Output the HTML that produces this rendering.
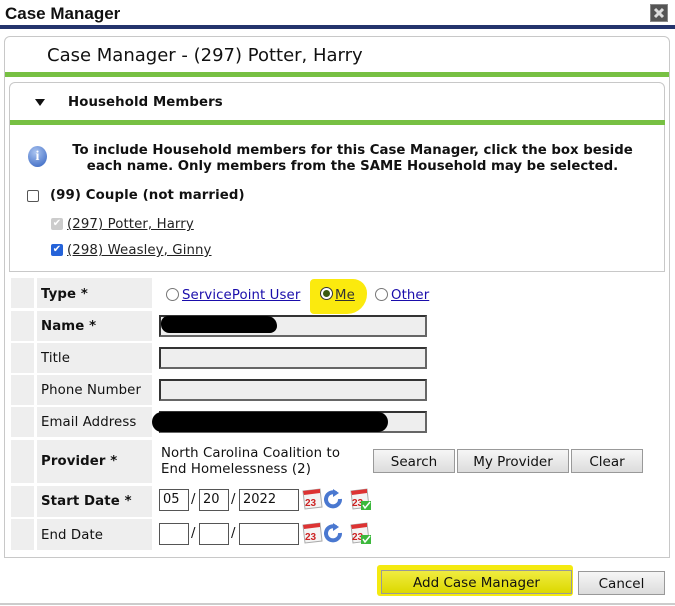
<!DOCTYPE html>
<html><head><meta charset="utf-8"><style>
*{box-sizing:border-box;margin:0;padding:0}
body{width:675px;height:606px;background:#fff;position:relative;overflow:hidden;font-family:"DejaVu Sans",Verdana,sans-serif;color:#111}
.a{position:absolute}
.t13{font-size:13.3px;letter-spacing:0.1px}
.b{font-weight:bold}
.cell{position:absolute;background:#eeeeee}
.inp{position:absolute;background:#eee;border:2px solid #333;border-right-color:#666;border-bottom-color:#666}
.din{position:absolute;background:#fff;border:1px solid #555;font-size:13px;padding:2px 3px;height:22px;line-height:16px}
.btn{position:absolute;background:linear-gradient(#f6f6f6,#dcdcdc);border:1px solid #999;font-size:13.5px;text-align:center;line-height:24px}
.radio{position:absolute;width:13px;height:13px;border:1px solid #777;border-radius:50%;background:#fff}
a{color:#1a0dab;text-decoration:underline}
.lk{text-decoration:underline}
</style></head><body>
<div class="a b" style="left:5px;top:4px;font-family:'Liberation Sans',sans-serif;font-size:17px">Case Manager</div>
<div class="a" style="left:650px;top:4px;width:18px;height:18px;background:#555;border:1px solid #888"><svg width="16" height="16"><path d="M4 4L12 12M12 4L4 12" stroke="#ddd" stroke-width="3"/></svg></div>
<div class="a" style="left:0;top:25px;width:675px;height:4px;background:#24346c"></div>

<div class="a" style="left:4px;top:36px;width:666px;height:522px;border:1px solid #c8c8c8;border-radius:6px 6px 0 0"></div>
<div class="a" style="left:47px;top:45px;font-size:18px;letter-spacing:0px">Case Manager - (297) Potter, Harry</div>
<div class="a" style="left:5px;top:72px;width:664px;height:5px;background:#77c043"></div>

<div class="a" style="left:9px;top:82px;width:656px;height:190px;border:1px solid #c8c8c8;border-radius:6px 6px 0 0"></div>
<div class="a" style="left:35px;top:99px;width:0;height:0;border-left:5px solid transparent;border-right:5px solid transparent;border-top:7px solid #111"></div>
<div class="a b t13" style="left:68px;top:95px">Household Members</div>
<div class="a" style="left:10px;top:120px;width:655px;height:5px;background:#77c043"></div>

<div class="a" style="left:28px;top:146px;width:19px;height:21px;border-radius:50%;background:radial-gradient(circle at 40% 30%,#aac4f0,#2f5fbf);color:#fff;font:bold 14px 'Liberation Serif',serif;text-align:center;line-height:21px">i</div>
<div class="a b t13" style="left:50px;top:143px;width:605px;text-align:center;line-height:16px;font-size:13.3px;letter-spacing:0">To include Household members for this Case Manager, click the box beside<br>each name. Only members from the SAME Household may be selected.</div>
<div class="a" style="left:27px;top:190px;width:12px;height:12px;border:1px solid #555;border-radius:2px;background:#fff"></div>
<div class="a b t13" style="left:50px;top:188px">(99) Couple (not married)</div>
<div class="a" style="left:51px;top:218px;width:12px;height:12px;background:#ccc;border-radius:2px;color:#fff;font-size:10px;line-height:12px;text-align:center">✔</div>
<div class="a t13 lk" style="left:67px;top:217px;color:#222">(297) Potter, Harry</div>
<div class="a" style="left:51px;top:244px;width:12px;height:12px;background:#2563d9;border-radius:2px;color:#fff;font-size:10px;line-height:12px;text-align:center">✔</div>
<div class="a t13 lk" style="left:67px;top:243px;color:#222">(298) Weasley, Ginny</div>

<div class="cell" style="left:11px;top:278px;width:23px;height:30px"></div><div class="cell" style="left:37px;top:278px;width:115px;height:30px"></div>
<div class="cell" style="left:11px;top:311px;width:23px;height:30px"></div><div class="cell" style="left:37px;top:311px;width:115px;height:30px"></div>
<div class="cell" style="left:11px;top:343px;width:23px;height:30px"></div><div class="cell" style="left:37px;top:343px;width:115px;height:30px"></div>
<div class="cell" style="left:11px;top:375px;width:23px;height:30px"></div><div class="cell" style="left:37px;top:375px;width:115px;height:30px"></div>
<div class="cell" style="left:11px;top:407px;width:23px;height:30px"></div><div class="cell" style="left:37px;top:407px;width:115px;height:30px"></div>
<div class="cell" style="left:11px;top:440px;width:23px;height:43px"></div><div class="cell" style="left:37px;top:440px;width:115px;height:43px"></div>
<div class="cell" style="left:11px;top:486px;width:23px;height:31px"></div><div class="cell" style="left:37px;top:486px;width:115px;height:31px"></div>
<div class="cell" style="left:11px;top:519px;width:23px;height:31px"></div><div class="cell" style="left:37px;top:519px;width:115px;height:31px"></div>

<div class="a b t13" style="left:41px;top:287px">Type *</div>
<div class="a b t13" style="left:41px;top:319px">Name *</div>
<div class="a t13" style="left:41px;top:351px">Title</div>
<div class="a t13" style="left:41px;top:383px">Phone Number</div>
<div class="a t13" style="left:41px;top:415px">Email Address</div>
<div class="a b t13" style="left:41px;top:454px">Provider *</div>
<div class="a b t13" style="left:41px;top:494px">Start Date *</div>
<div class="a t13" style="left:41px;top:528px">End Date</div>

<div class="a" style="left:310px;top:279px;width:57px;height:35px;background:#fbea0e;border-radius:4px 14px 20px 4px"></div>
<div class="radio" style="left:166px;top:288px"></div>
<a class="a t13" style="left:182px;top:288px">ServicePoint User</a>
<div class="radio" style="left:320px;top:287px;border-color:#333"><div style="position:absolute;left:2px;top:2px;width:7px;height:7px;border-radius:50%;background:#3a5a10"></div></div>
<a class="a t13" style="left:335px;top:288px;color:#333">Me</a>
<div class="radio" style="left:375px;top:288px"></div>
<a class="a t13" style="left:391px;top:288px">Other</a>

<div class="inp" style="left:159px;top:315px;width:268px;height:22px"></div>
<div class="a" style="left:161px;top:316px;width:116px;height:17px;background:#000;border-radius:10px 14px 10px 12px"></div>
<div class="inp" style="left:159px;top:347px;width:268px;height:22px"></div>
<div class="inp" style="left:159px;top:379px;width:268px;height:22px"></div>
<div class="inp" style="left:159px;top:411px;width:268px;height:22px"></div>
<div class="a" style="left:152px;top:412px;width:236px;height:20px;background:#000;border-radius:10px"></div>

<div class="a t13" style="left:161px;top:446px;line-height:16px">North Carolina Coalition to<br>End Homelessness (2)</div>
<div class="btn" style="left:373px;top:449px;width:82px;height:24px">Search</div>
<div class="btn" style="left:457px;top:449px;width:112px;height:24px">My Provider</div>
<div class="btn" style="left:571px;top:449px;width:72px;height:24px">Clear</div>

<div class="din" style="left:159px;top:489px;width:30px">05</div><div class="a t13" style="left:191px;top:492px">/</div>
<div class="din" style="left:199px;top:489px;width:30px">20</div><div class="a t13" style="left:231px;top:492px">/</div>
<div class="din" style="left:239px;top:489px;width:60px">2022</div>
<div class="din" style="left:159px;top:523px;width:30px"></div><div class="a t13" style="left:191px;top:526px">/</div>
<div class="din" style="left:199px;top:523px;width:30px"></div><div class="a t13" style="left:231px;top:526px">/</div>
<div class="din" style="left:239px;top:523px;width:60px"></div>

<svg class="a" style="left:300px;top:487px" width="75" height="64">
<g id="ic">
<path d="M3 4L20 2L22 20L5 22Z" fill="#f4f4f4" stroke="#aaa"/><path d="M3 4L20 2L20 6L4 8Z" fill="#d33"/>
<text x="5" y="19" font-size="10" font-weight="bold" fill="#c22" font-family="Liberation Sans">23</text>
<path d="M36 6A7 7 0 1 0 40 12" fill="none" stroke="#4a78d0" stroke-width="4"/><path d="M33 2L39 6L33 10Z" fill="#4a78d0"/>
<path d="M51 4L67 2L69 20L53 22Z" fill="#f4f4f4" stroke="#aaa"/><path d="M51 4L67 2L67 6L52 8Z" fill="#d33"/>
<text x="52" y="19" font-size="10" font-weight="bold" fill="#c22" font-family="Liberation Sans">23</text>
<rect x="61" y="14" width="10" height="9" fill="#3cb83c"/><path d="M63 18L65 21L70 15" stroke="#fff" stroke-width="1.5" fill="none"/>
</g>
<use href="#ic" y="34"/>
</svg>

<div class="a" style="left:377px;top:565px;width:196px;height:31px;background:#f4ea10;border-radius:3px"></div>
<div class="btn" style="left:381px;top:570px;width:191px;height:24px;background:linear-gradient(#f0ec40,#dcd800)">Add Case Manager</div>
<div class="btn" style="left:578px;top:571px;width:87px;height:24px">Cancel</div>
<div class="a" style="left:0;top:603px;width:675px;height:2px;background:#ccc"></div>
</body></html>
